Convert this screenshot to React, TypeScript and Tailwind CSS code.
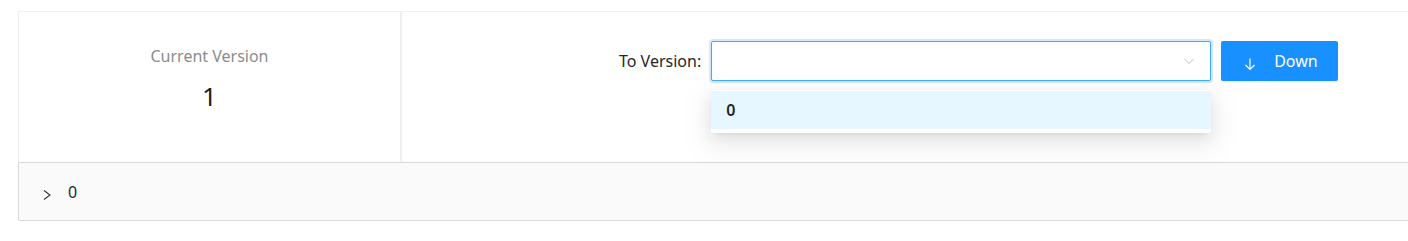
import React from "react";

const font = { fontFamily: '"Noto Sans", "Open Sans", sans-serif' };

function ChevronDown() {
  return (
    <svg width="12" height="12" viewBox="0 0 12 12" fill="none">
      <path d="M1.5 4 L6 8.5 L10.5 4" stroke="#bfbfbf" strokeWidth="1" />
    </svg>
  );
}

function ArrowDown() {
  return (
    <svg width="14" height="14" viewBox="0 0 14 14" fill="none">
      <path d="M7 1.5 V12.5 M2.5 8 L7 12.5 L11.5 8" stroke="#fff" strokeWidth="1.2" />
    </svg>
  );
}

function ChevronRight() {
  return (
    <svg width="12" height="12" viewBox="0 0 12 12" fill="none">
      <path d="M3 1.5 L9 6 L3 10.5" stroke="#333" strokeWidth="1.1" />
    </svg>
  );
}

export default function App() {
  return (
    <div className="w-full h-[241px] overflow-hidden bg-white" style={font}>
      <div className="pt-[11px] pl-[18px] w-[1600px]">
        {/* top row */}
        <div className="flex h-[151px] border-t border-l border-[#f0f0f0]">
          <div className="w-[383px] border-r-2 border-[#f0f0f0] flex flex-col items-center pt-[32px]">
            <p className="text-[16px] leading-[24px] text-[#8c8c8c]">Current Version</p>
            <p className="mt-[11px] text-[26px] leading-[34px] text-[#1f1f1f]">1</p>
          </div>
          <div className="flex-1 pl-[217px] pt-[29px]">
            <div className="flex items-start">
              <label className="h-[40px] flex items-center text-[16px] text-[#262626] pr-[10px]">
                To Version:
              </label>
              <div className="relative">
                <div className="w-[500px] h-[40px] rounded-[2px] border border-[#40a9ff] shadow-[0_0_0_2px_rgba(24,144,255,0.2)] bg-white flex items-center justify-end pr-[15px]">
                  <ChevronDown />
                </div>
                <div className="absolute left-0 top-[49px] w-[500px] bg-white rounded-[2px] pt-[1px] pb-[4px] shadow-[0_3px_6px_-4px_rgba(0,0,0,0.12),0_6px_16px_0_rgba(0,0,0,0.08),0_9px_28px_8px_rgba(0,0,0,0.05)]">
                  <div className="h-[38px] bg-[#e6f7ff] flex items-center pl-[15px] text-[16px] font-semibold text-[#262626]">
                    0
                  </div>
                </div>
              </div>
              <button className="ml-[10px] w-[117px] h-[40px] rounded-[2px] bg-[#1890ff] text-white text-[16px] flex items-center pl-[22px] shadow-[0_2px_0_rgba(0,0,0,0.045)]">
                <span className="mt-[6px]"><ArrowDown /></span>
                <span className="ml-[17px]">Down</span>
              </button>
            </div>
          </div>
        </div>
        {/* collapse */}
        <div className="h-[59px] bg-[#fafafa] border border-[#d9d9d9] rounded-b-[2px] flex items-center pl-[22px]">
          <span className="mt-[7px]"><ChevronRight /></span>
          <span className="ml-[15px] text-[16px] text-[#262626]">0</span>
        </div>
      </div>
    </div>
  );
}
